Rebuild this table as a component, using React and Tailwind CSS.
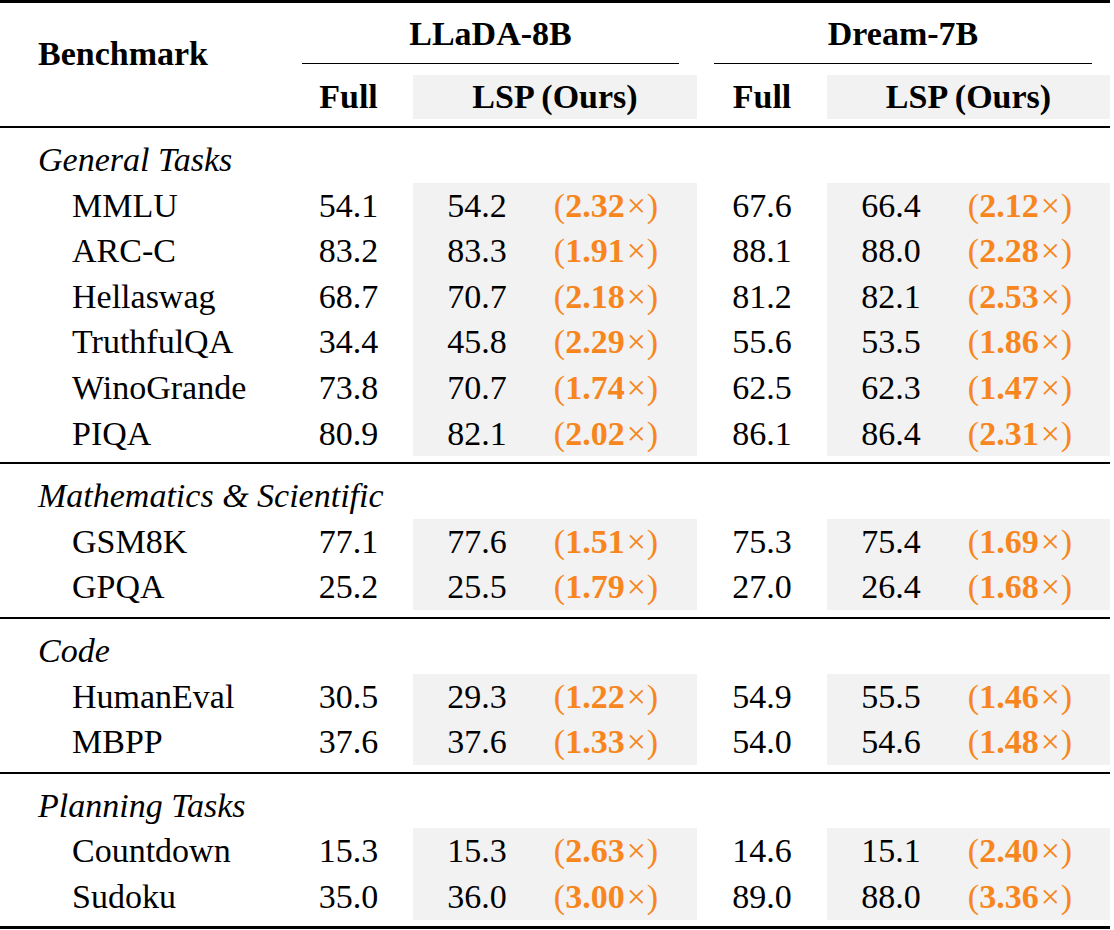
const sections = [
  {
    title: 'General Tasks',
    pb: 'pb-[6px]',
    rows: [
      ['MMLU', '54.1', '54.2', '2.32', '67.6', '66.4', '2.12'],
      ['ARC-C', '83.2', '83.3', '1.91', '88.1', '88.0', '2.28'],
      ['Hellaswag', '68.7', '70.7', '2.18', '81.2', '82.1', '2.53'],
      ['TruthfulQA', '34.4', '45.8', '2.29', '55.6', '53.5', '1.86'],
      ['WinoGrande', '73.8', '70.7', '1.74', '62.5', '62.3', '1.47'],
      ['PIQA', '80.9', '82.1', '2.02', '86.1', '86.4', '2.31'],
    ],
  },
  {
    title: 'Mathematics & Scientific',
    pb: 'pb-[7px]',
    rows: [
      ['GSM8K', '77.1', '77.6', '1.51', '75.3', '75.4', '1.69'],
      ['GPQA', '25.2', '25.5', '1.79', '27.0', '26.4', '1.68'],
    ],
  },
  {
    title: 'Code',
    pb: 'pb-[7px]',
    rows: [
      ['HumanEval', '30.5', '29.3', '1.22', '54.9', '55.5', '1.46'],
      ['MBPP', '37.6', '37.6', '1.33', '54.0', '54.6', '1.48'],
    ],
  },
  {
    title: 'Planning Tasks',
    pb: 'pb-[6px]',
    rows: [
      ['Countdown', '15.3', '15.3', '2.63', '14.6', '15.1', '2.40'],
      ['Sudoku', '35.0', '36.0', '3.00', '89.0', '88.0', '3.36'],
    ],
  },
];

function Speedup({ v }) {
  return (
    <span className="text-[#f7861e]">
      (<span className="font-bold">{v}</span>
      <span className="ml-[2px] mr-[1px]">×</span>)
    </span>
  );
}

function DataRow({ row }) {
  const [name, f1, l1, s1, f2, l2, s2] = row;
  return (
    <div className="flex h-[45.6px] items-stretch">
      <div className="w-[302px] pl-[72px] flex items-center">{name}</div>
      <div className="w-[93px] flex items-center justify-center">{f1}</div>
      <div className="w-[18px]" />
      <div className="w-[284px] bg-[#f2f2f2] flex items-center">
        <div className="w-[128px] text-center">{l1}</div>
        <div className="w-[130px] text-center">
          <Speedup v={s1} />
        </div>
      </div>
      <div className="w-[130px] flex items-center justify-center">{f2}</div>
      <div className="w-[283px] bg-[#f2f2f2] flex items-center">
        <div className="w-[128px] text-center">{l2}</div>
        <div className="w-[130px] text-center">
          <Speedup v={s2} />
        </div>
      </div>
    </div>
  );
}

export default function App() {
  return (
    <div className="w-[1114px] h-[930px] bg-white overflow-hidden">
      <div
        className="w-[1110px] text-[34px] leading-[45.6px] text-black"
        style={{ fontFamily: '"Liberation Serif", "Times New Roman", serif' }}
      >
        <div className="h-[3px] bg-black" />

        {/* header */}
        <div className="flex h-[123px]">
          <div className="w-[302px] pl-[38px] pt-[28px] font-bold">Benchmark</div>
          <div className="flex flex-col font-bold">
            <div className="flex h-[61px]">
              <div className="w-[377px] pt-[8px] text-center border-b border-black">LLaDA-8B</div>
              <div className="w-[35px]" />
              <div className="w-[378px] pt-[8px] text-center border-b border-black">Dream-7B</div>
            </div>
            <div className="flex h-[44px] mt-[11px] items-stretch">
              <div className="w-[93px] flex items-center justify-center">Full</div>
              <div className="w-[18px]" />
              <div className="w-[284px] bg-[#f2f2f2] flex items-center justify-center">LSP (Ours)</div>
              <div className="w-[130px] flex items-center justify-center">Full</div>
              <div className="w-[283px] bg-[#f2f2f2] flex items-center justify-center">LSP (Ours)</div>
            </div>
          </div>
        </div>

        {sections.map((s, i) => (
          <div key={i} className={`border-t-2 border-black pt-[9px] ${s.pb}`}>
            <div className="h-[45.6px] pl-[38px] italic flex items-center">{s.title}</div>
            {s.rows.map((r, j) => (
              <DataRow key={j} row={r} />
            ))}
          </div>
        ))}

        <div className="h-[3px] bg-black" />
      </div>
    </div>
  );
}
